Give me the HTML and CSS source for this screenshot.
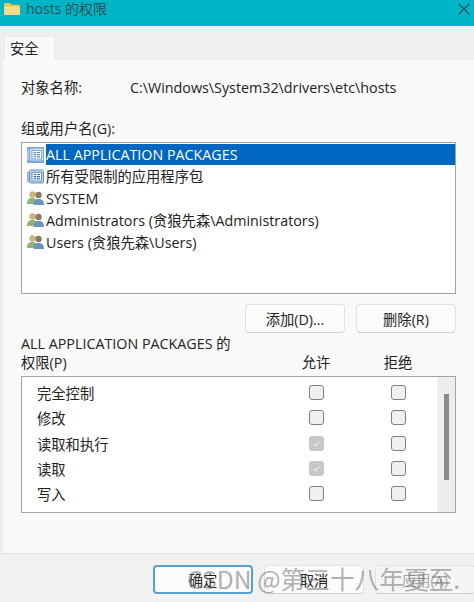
FILE: index.html
```html
<!DOCTYPE html>
<html lang="zh-CN">
<head>
<meta charset="utf-8">
<title>hosts 的权限</title>
<link rel="stylesheet" href="styles.css">
</head>
<body>
<svg class="defs" width="0" height="0" aria-hidden="true">
  <defs>
    <symbol id="pkg" viewBox="0 0 17 16">
      <rect x="0" y="2.500" width="4" height="11" rx="1" fill="#9dbbd8"/>
      <rect x="2.500" y="1" width="14" height="13" rx="1.500" fill="#bcd5ec" stroke="#6d93b8"/>
      <rect x="5" y="3.500" width="9.500" height="8.500" fill="#fff" stroke="#4d86bd" stroke-width="0.800"/>
      <path d="M6.500 5.500h2.500M10 5.500h3M6.500 7.700h2.500M10 7.700h3M6.500 9.900h2.500M10 9.900h3" stroke="#2a72b5" stroke-width="1.200"/>
    </symbol>
    <symbol id="users" viewBox="0 0 17 16">
      <circle cx="5.500" cy="4.500" r="3.200" fill="#c9b67c"/>
      <path d="M0 14c0-4.500 2.200-6 5.200-6s5.300 1.500 5.300 6z" fill="#8db56f"/>
      <circle cx="11.500" cy="5" r="3.200" fill="#8a7a68"/>
      <path d="M6.500 15c0-4.500 2.200-6 5.200-6s5.300 1.500 5.300 6z" fill="#6d92c0"/>
    </symbol>
  </defs>
</svg>
<div class="window">
  <header class="titlebar">
    <svg class="folder" viewBox="0 0 17 13" aria-hidden="true">
      <path d="M0 1.500Q0 0 1.500 0H6l2 2h7.500Q17 2 17 3.500V13H0z" fill="#f2c14e"/>
      <rect x="0" y="3.500" width="17" height="9.500" rx="1" fill="#fbdc84"/>
    </svg>
    <span class="title">hosts 的权限</span>
    <svg class="close" viewBox="0 0 12 12" aria-hidden="true"><path d="M0.500 0.500L11.500 11.500M11.500 0.500L0.500 11.500" stroke="#1f4a55" stroke-width="1.100" fill="none"/></svg>
  </header>
  <nav class="tabstrip"><div class="tab">安全</div></nav>
  <main class="panel">
    <div class="object-row"><span class="object-label">对象名称:</span><span>C:\Windows\System32\drivers\etc\hosts</span></div>
    <div class="group-label">组或用户名(G):</div>
    <ul class="userlist">
      <li class="user"><svg class="uicon uicon-sel"><use href="#pkg"/></svg><span class="uname selected">ALL APPLICATION PACKAGES</span></li>
      <li class="user"><svg class="uicon"><use href="#pkg"/></svg><span class="uname">所有受限制的应用程序包</span></li>
      <li class="user"><svg class="uicon"><use href="#users"/></svg><span class="uname">SYSTEM</span></li>
      <li class="user"><svg class="uicon"><use href="#users"/></svg><span class="uname">Administrators (贪狼先森\Administrators)</span></li>
      <li class="user"><svg class="uicon"><use href="#users"/></svg><span class="uname">Users (贪狼先森\Users)</span></li>
    </ul>
    <div class="list-actions">
      <button class="btn">添加(D)...</button>
      <button class="btn">删除(R)</button>
    </div>
    <div class="perm-head">
      <div class="perm-title">ALL APPLICATION PACKAGES 的<br>权限(P)</div>
      <div class="perm-col">允许</div>
      <div class="perm-col">拒绝</div>
    </div>
    <div class="permlist">
      <div class="perm-rows">
        <div class="perm"><span class="perm-name">完全控制</span><span class="cell"><i class="cb"></i></span><span class="cell"><i class="cb"></i></span></div>
        <div class="perm"><span class="perm-name">修改</span><span class="cell"><i class="cb"></i></span><span class="cell"><i class="cb"></i></span></div>
        <div class="perm"><span class="perm-name">读取和执行</span><span class="cell"><i class="cb on"><svg viewBox="0 0 14 14"><path d="M4 7.500L6.200 9.500L10 5" stroke="#f2f2f2" stroke-width="1.200" fill="none"/></svg></i></span><span class="cell"><i class="cb"></i></span></div>
        <div class="perm"><span class="perm-name">读取</span><span class="cell"><i class="cb on"><svg viewBox="0 0 14 14"><path d="M4 7.500L6.200 9.500L10 5" stroke="#f2f2f2" stroke-width="1.200" fill="none"/></svg></i></span><span class="cell"><i class="cb"></i></span></div>
        <div class="perm"><span class="perm-name">写入</span><span class="cell"><i class="cb"></i></span><span class="cell"><i class="cb"></i></span></div>
        <div class="perm"><span class="perm-name"></span><span class="cell"><i class="cb"></i></span><span class="cell"><i class="cb"></i></span></div>
      </div>
      <div class="scrollbar"><div class="thumb"></div></div>
    </div>
  </main>
  <footer class="footer">
    <button class="btn primary">确定</button>
    <button class="btn">取消</button>
    <button class="btn disabled">应用(A)</button>
  </footer>
  <div class="watermark">CSDN @第三十八年夏至.</div>
</div>
</body>
</html>
```
FILE: styles.css
```css
* { box-sizing: border-box; }
html, body { margin: 0; padding: 0; }
body {
  font-family: "Open Sans", "Noto Sans CJK SC", sans-serif;
  font-size: 14.300px;
  color: #222;
  background: #f9f9f9;
}
.defs { position: absolute; }
.window {
  position: relative;
  width: 474px;
  height: 602px;
  display: flex;
  flex-direction: column;
  overflow: hidden;
}
.titlebar {
  height: 26px;
  flex: none;
  background: #00b5c5;
  display: flex;
  align-items: flex-start;
  padding: 3px 4px 0 4px;
  color: #27525a;
}
.folder { width: 16px; height: 12px; flex: none; }
.title { margin-left: 6px; line-height: 14px; margin-top: -1px; font-size: 14px; }
.close { width: 12px; height: 12px; margin-left: auto; flex: none; }
.tabstrip {
  height: 34px;
  flex: none;
  background: #efefef;
  padding: 10px 0 0 4px;
}
.tab {
  width: 51px;
  height: 24px;
  background: #f9f9f9;
  border: 1px solid #ececec;
  border-bottom: 0;
  padding-left: 5px;
  line-height: 23px;
}
.panel {
  height: 493px;
  flex: none;
  background: #f9f9f9;
  border-left: 3px solid #efefef;
  padding: 18px 18px 0 18px;
}
.object-row { display: flex; height: 20px; line-height: 20px; }
.object-label { width: 109px; }
.group-label { margin-top: 21px; height: 20px; line-height: 20px; }
.userlist {
  list-style: none;
  margin: 3px 0 0 0;
  padding: 1px 0 0 0;
  height: 152px;
  background: #fff;
  border: 1px solid #a3a3a3;
}
.user { display: flex; align-items: center; height: 21.800px; padding-left: 5px; }
.uicon { width: 17px; height: 16px; flex: none; margin-right: 2px; }
.uicon-sel { background: #4f94d4; opacity: 0.8; }
.uname { flex: 1; height: 21px; line-height: 21px; }
.selected { background: #0067c0; color: #fff; }
.list-actions { display: flex; justify-content: flex-end; gap: 11px; margin-top: 10px; }
.btn {
  width: 100px;
  height: 29px;
  padding: 0;
  font: inherit;
  color: #222;
  background: #fbfbfb;
  border: 1px solid #e2e2e2;
  border-bottom-color: #cfcfcf;
  border-radius: 4px;
}
.disabled { color: #a8a8a8; background: #f5f5f5; }
.perm-head { display: flex; align-items: flex-end; height: 39px; line-height: 19px; }
.perm-title { width: 254px; }
.perm-col { width: 82px; text-align: center; }
.permlist {
  display: flex;
  margin-top: 4px;
  height: 137px;
  background: #fff;
  border: 1px solid #a3a3a3;
  overflow: hidden;
}
.perm-rows { flex: 1; min-width: 0; padding-top: 3px; }
.perm { display: flex; align-items: center; height: 25.300px; }
.perm-name { width: 253px; flex: none; padding-left: 15px; }
.cell { width: 82px; flex: none; display: flex; justify-content: center; }
.cb {
  display: block;
  width: 15px;
  height: 15px;
  background: #f0f0f0;
  border: 1px solid #808080;
  border-radius: 3px;
}
.cb.on { background: #c6c6c6; border-color: #c6c6c6; }
.cb svg { display: block; width: 13px; height: 13px; }
.scrollbar { width: 18px; flex: none; background: #eeeeee; padding: 17px 6px 0 7px; }
.thumb { width: 5px; height: 86px; background: #8a8a8a; }
.footer {
  flex: 1;
  background: #f1f1f1;
  border-top: 1px solid #e6e6e6;
  display: flex;
  gap: 11px;
  padding: 11px 0 0 153px;
}
.footer .btn { flex: none; }
.primary { border: 2px solid #5a9fd0; background: #fcfcfc; }
.watermark {
  position: absolute;
  left: 187px;
  top: 560px;
  font-family: "Noto Sans CJK SC", sans-serif;
  font-size: 24.700px;
  line-height: 36px;
  white-space: nowrap;
  color: rgba(110, 110, 110, 0.55);
}
```
